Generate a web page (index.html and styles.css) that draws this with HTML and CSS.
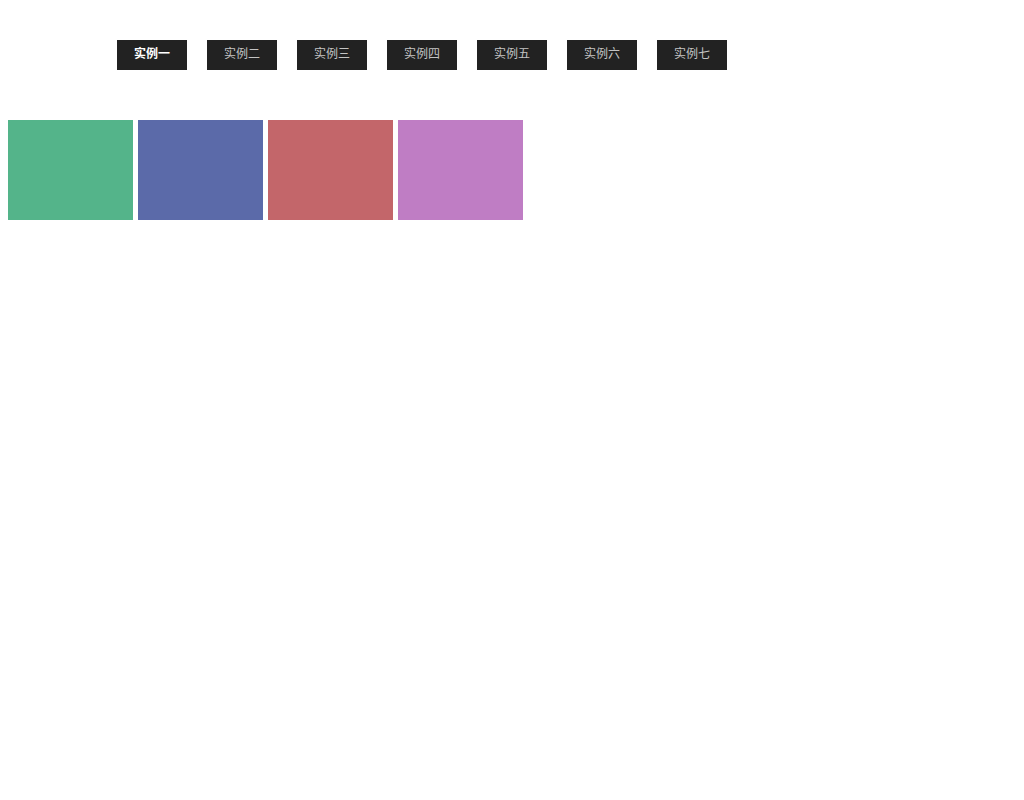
FILE: index.html
```html
<!DOCTYPE html>
<html lang="zh">
<head>
<meta charset="utf-8">
<title>实例</title>
<link rel="stylesheet" href="styles.css">
</head>
<body>
<nav class="tabs">
  <a class="tab active">实例一</a>
  <a class="tab">实例二</a>
  <a class="tab">实例三</a>
  <a class="tab">实例四</a>
  <a class="tab">实例五</a>
  <a class="tab">实例六</a>
  <a class="tab">实例七</a>
</nav>
<div class="boxes">
  <div class="box green"></div>
  <div class="box blue"></div>
  <div class="box red"></div>
  <div class="box purple"></div>
</div>
</body>
</html>
```
FILE: styles.css
```css
html, body { background: #fff; }
body {
  margin: 0;
  padding: 40px 8px 8px;
  font-family: "Noto Sans CJK SC", "DejaVu Sans", sans-serif;
}
.tabs {
  display: flex;
  gap: 20px;
  padding-left: 109px;
}
.tab {
  box-sizing: border-box;
  width: 70px;
  height: 30px;
  background: #222;
  color: #c4c4c4;
  font-size: 12px;
  line-height: 26px;
  text-align: center;
  cursor: pointer;
}
.tab.active {
  color: #fff;
  font-weight: bold;
}
.boxes {
  display: flex;
  gap: 5px;
  margin-top: 50px;
}
.box { width: 125px; height: 100px; }
.green { background: #54b48a; }
.blue { background: #5b6aa9; }
.red { background: #c3666a; }
.purple { background: #bf7dc4; }
```
